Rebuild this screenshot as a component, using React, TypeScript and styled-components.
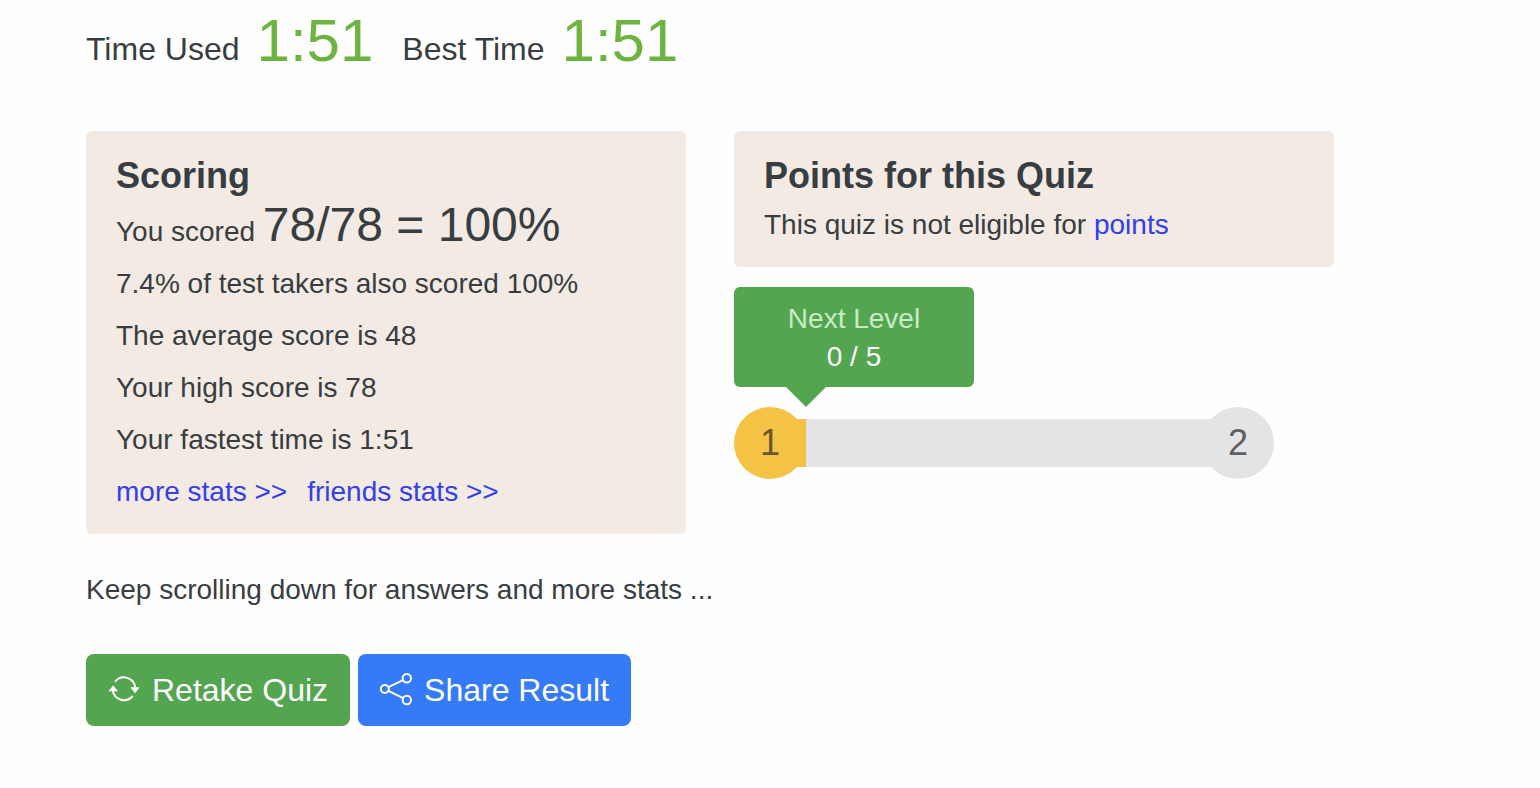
import React from 'react';
import styled, { createGlobalStyle } from 'styled-components';

const GlobalStyle = createGlobalStyle`
  *, *::before, *::after { box-sizing: border-box; }
  body {
    margin: 0;
    background: #fefefe;
    color: #373d41;
    font-family: Arial, "Liberation Sans", sans-serif;
    font-size: 28px;
    line-height: 42px;
  }
`;

const Page = styled.main`
  max-width: 1420px;
  padding: 0 86px 62px;
`;

const Times = styled.dl`
  display: flex;
  flex-wrap: wrap;
  gap: 0 29px;
  margin: 0;
  padding-top: 12px;
`;

const TimeItem = styled.div`
  display: flex;
  align-items: flex-end;
  gap: 17px;
`;

const TimeLabel = styled.dt`
  font-size: 32px;
`;

const TimeValue = styled.dd`
  margin: 0;
  font-size: 60px;
  line-height: 58px;
  color: #6cb33f;
`;

const Columns = styled.div`
  display: grid;
  grid-template-columns: 1fr 1fr;
  align-items: start;
  gap: 48px;
  margin-top: 61px;
`;

const Card = styled.section`
  padding: 20px 30px 21px;
  border-radius: 6px;
  background: #f2eae3;
`;

const CardTitle = styled.h2`
  margin: 0 0 3px;
  font-size: 36px;
  line-height: 50px;
`;

const Lines = styled.div`
  display: grid;
  gap: 10px;
`;

const Line = styled.p`
  margin: 0;
`;

const Score = styled.span`
  font-size: 48px;
`;

const StatLinks = styled.nav`
  display: flex;
  flex-wrap: wrap;
  gap: 0 20px;
`;

const Link = styled.a`
  color: #3340ea;
  text-decoration: none;
`;

const Level = styled.section`
  max-width: 540px;
  margin-top: 20px;
`;

const LevelTip = styled.div`
  position: relative;
  width: 240px;
  margin-bottom: 20px;
  padding: 13px 20px 11px;
  border-radius: 6px;
  background: #54a550;
  color: #fff;
  line-height: 38px;
  text-align: center;

  &::after {
    content: '';
    position: absolute;
    top: 100%;
    left: 52px;
    border: 20px solid transparent;
    border-top-color: #54a550;
    border-bottom: 0;
  }
`;

const TipLabel = styled.div`
  color: #c8ebc6;
`;

const LevelBar = styled.div`
  display: grid;
  align-items: center;
`;

const Track = styled.div`
  grid-area: 1 / 1;
  height: 48px;
  margin: 0 36px;
  background: #e4e4e4;
`;

const TrackFill = styled.div`
  width: 36px;
  height: 100%;
  background: #f4c245;
`;

const LevelEnds = styled.div`
  grid-area: 1 / 1;
  display: flex;
  justify-content: space-between;
`;

const LevelBadge = styled.span<{ $reached?: boolean }>`
  width: 72px;
  border-radius: 50%;
  background: ${(p) => (p.$reached ? '#f4c245' : '#e4e4e4')};
  color: ${(p) => (p.$reached ? '#66582f' : '#5b6064')};
  font-size: 36px;
  line-height: 72px;
  text-align: center;
`;

const Hint = styled.p`
  margin: 35px 0 43px;
`;

const Actions = styled.div`
  display: flex;
  flex-wrap: wrap;
  gap: 8px;
`;

const ActionButton = styled.button<{ $tone: 'green' | 'blue' }>`
  display: flex;
  align-items: center;
  gap: 12px;
  padding: 0 22px;
  border: 0;
  border-radius: 8px;
  background: ${(p) => (p.$tone === 'green' ? '#54a550' : '#357af6')};
  color: #fff;
  font: inherit;
  font-size: 32px;
  line-height: 72px;
  cursor: pointer;
`;

const LoopIcon = () => (
  <svg width="32" height="34" viewBox="0 0 32 34" fill="none" stroke="#fff" strokeWidth="2" aria-hidden="true">
    <path d="M7.1 8.6A11.3 11.3 0 0 1 27.2 15" />
    <path d="M24.7 23A11.3 11.3 0 0 1 4.8 17.4" />
    <path d="M22.4 14.2h9.2L27 20.2zM.5 18.2h9.4L5.2 12.2z" fill="#fff" stroke="none" />
  </svg>
);

const ShareIcon = () => (
  <svg width="32" height="34" viewBox="0 0 32 34" fill="none" stroke="#fff" strokeWidth="2" aria-hidden="true">
    <circle cx="4.8" cy="16" r="4" />
    <circle cx="26.8" cy="5.2" r="4.2" />
    <circle cx="26.8" cy="27" r="4.2" />
    <path d="M8.4 14.2 23 7.1M8.4 17.8 23 25.1" />
  </svg>
);

const times = [
  { label: 'Time Used', value: '1:51' },
  { label: 'Best Time', value: '1:51' },
];

const stats = [
  '7.4% of test takers also scored 100%',
  'The average score is 48',
  'Your high score is 78',
  'Your fastest time is 1:51',
];

export default function App() {
  return (
    <>
      <GlobalStyle />
      <Page>
        <Times>
          {times.map((t) => (
            <TimeItem key={t.label}>
              <TimeLabel>{t.label}</TimeLabel>
              <TimeValue>{t.value}</TimeValue>
            </TimeItem>
          ))}
        </Times>
        <Columns>
          <Card>
            <CardTitle>Scoring</CardTitle>
            <Lines>
              <Line>
                You scored <Score>78/78 = 100%</Score>
              </Line>
              {stats.map((s) => (
                <Line key={s}>{s}</Line>
              ))}
              <StatLinks>
                <Link href="#stats">more stats &gt;&gt;</Link>
                <Link href="#friends">friends stats &gt;&gt;</Link>
              </StatLinks>
            </Lines>
          </Card>
          <div>
            <Card>
              <CardTitle>Points for this Quiz</CardTitle>
              <Line>
                This quiz is not eligible for <Link href="#points">points</Link>
              </Line>
            </Card>
            <Level>
              <LevelTip>
                <TipLabel>Next Level</TipLabel>
                <div>0 / 5</div>
              </LevelTip>
              <LevelBar>
                <Track>
                  <TrackFill />
                </Track>
                <LevelEnds>
                  <LevelBadge $reached>1</LevelBadge>
                  <LevelBadge>2</LevelBadge>
                </LevelEnds>
              </LevelBar>
            </Level>
          </div>
        </Columns>
        <Hint>Keep scrolling down for answers and more stats ...</Hint>
        <Actions>
          <ActionButton type="button" $tone="green">
            <LoopIcon />
            Retake Quiz
          </ActionButton>
          <ActionButton type="button" $tone="blue">
            <ShareIcon />
            Share Result
          </ActionButton>
        </Actions>
      </Page>
    </>
  );
}
